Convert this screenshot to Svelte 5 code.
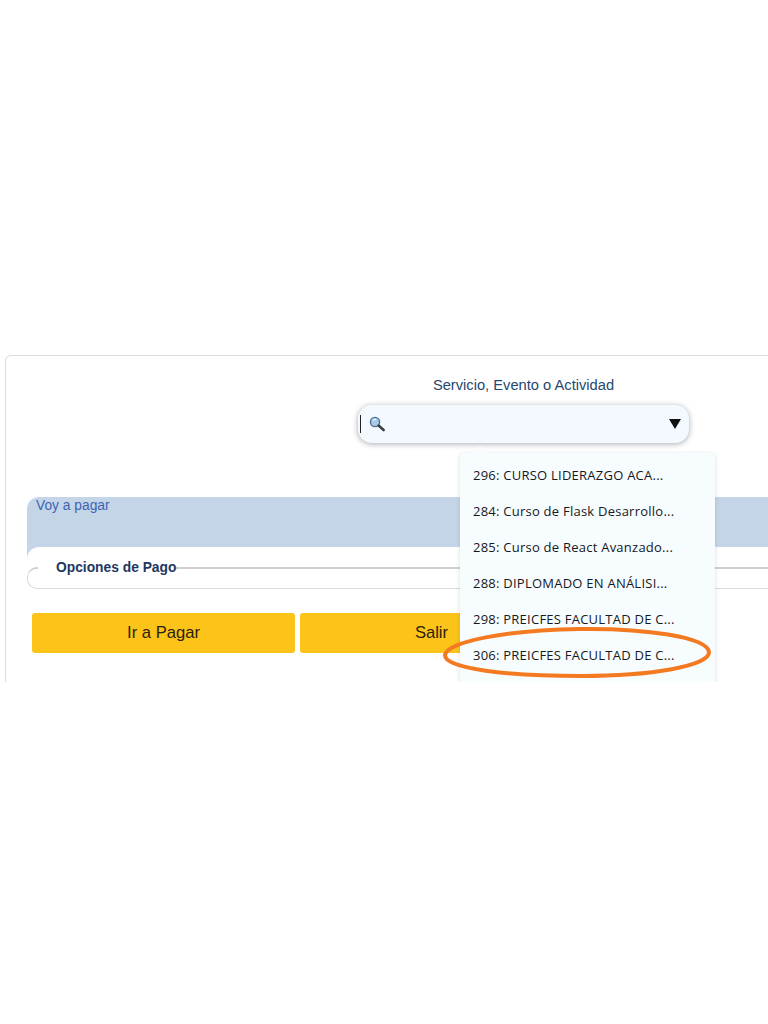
<script>
  const items = [
    "296: CURSO LIDERAZGO ACA...",
    "284: Curso de Flask Desarrollo...",
    "285: Curso de React Avanzado...",
    "288: DIPLOMADO EN ANÁLISI...",
    "298: PREICFES FACULTAD DE C...",
    "306: PREICFES FACULTAD DE C...",
    "",
  ];
</script>

<div class="page">
  <div class="card">
    <div class="picker">
      <div class="picker-label">Servicio, Evento o Actividad</div>
      <div class="field">
        <span class="caret"></span>
        <svg class="search" viewBox="0 0 16 16" width="16" height="16">
          <circle cx="6" cy="6" r="4.6" fill="#a9c8e8" stroke="#4d6f94" stroke-width="1.4" />
          <path d="M4 4.4a3 3 0 0 1 3-1" fill="none" stroke="#eef6fd" stroke-width="1.2" />
          <path d="M9.6 9.6l5 4.4" stroke="#3a3f46" stroke-width="2.6" stroke-linecap="round" />
        </svg>
        <svg class="arrow" viewBox="0 0 12 10" width="12" height="10">
          <path d="M0 0h12L6 10z" fill="#111" />
        </svg>
      </div>
    </div>

    <div class="banner">Voy a pagar</div>
    <div class="panel">
      <fieldset>
        <legend>Opciones de Pago</legend>
      </fieldset>
      <div class="actions">
        <button>Ir a Pagar</button>
        <button>Salir</button>
      </div>
    </div>

    <div class="dropdown">
      <ul>
        {#each items as item}
          <li>{item}</li>
        {/each}
      </ul>
    </div>

    <svg class="circled" viewBox="0 0 272 54" width="272" height="54">
      <path
        d="M4 29C6 15 70 4 138 3c66-1 128 8 130 23 1 14-58 24-128 24C68 50 3 43 4 29z"
        fill="none"
        stroke="#f47a22"
        stroke-width="4"
      />
    </svg>
  </div>
</div>

<style>
  :global(body) {
    background: #fff;
    font-family: "Liberation Sans", Arial, sans-serif;
  }

  .page {
    width: 768px;
    height: 1024px;
    box-sizing: border-box;
    padding: 355px 0 0 5px;
    overflow: hidden;
  }

  .card {
    position: relative;
    width: 800px;
    height: 326px;
    overflow: hidden;
    border: 1px solid #dcdcdc;
    border-bottom: none;
    border-radius: 6px 6px 0 0;
  }

  .picker {
    width: 331px;
    margin: 20px 0 0 352px;
  }

  .picker-label {
    height: 18px;
    line-height: 18px;
    font-size: 14.7px;
    text-align: center;
    color: #27476f;
  }

  .field {
    display: flex;
    align-items: center;
    height: 38px;
    margin-top: 11px;
    padding: 0 8px 0 2px;
    border-radius: 14px;
    background: #f3f9fe;
    box-shadow: 0 1px 5px 1px rgba(70, 80, 90, 0.36);
  }

  .caret {
    width: 1px;
    height: 18px;
    background: #222;
  }

  .search {
    margin-left: 8px;
  }

  .arrow {
    margin-left: auto;
  }

  .banner {
    height: 62px;
    box-sizing: border-box;
    margin: 54px 0 0 21px;
    padding-left: 9px;
    border-radius: 12px 0 0 0;
    background: #c3d5e6;
    font-size: 13.8px;
    line-height: 17px;
    color: #3f63b5;
  }

  .panel {
    margin: -12px 0 0 21px;
    padding-top: 12px;
    border-radius: 12px 0 0 0;
    background: #fff;
  }

  fieldset {
    height: 30px;
    box-sizing: border-box;
    margin: 0;
    padding: 0;
    border: 1px solid #dadada;
    border-top: 2px solid #cfcfcf;
    border-right: none;
    border-radius: 10px 0 0 10px;
  }

  legend {
    margin-left: 10px;
    padding: 0 0 0 18px;
    background: #fff;
    font-size: 13.8px;
    line-height: 18px;
    font-weight: 700;
    color: #1d3763;
  }

  .actions {
    display: flex;
    gap: 5px;
    margin: 24px 0 0 5px;
  }

  button {
    width: 263px;
    height: 40px;
    padding: 0;
    border: none;
    border-radius: 3px;
    background: #fcc318;
    font: 16.6px "Liberation Sans", Arial, sans-serif;
    color: #2b1d10;
  }

  .dropdown {
    position: absolute;
    left: 454px;
    top: 97px;
    width: 255px;
    border-radius: 4px;
    background: #f7fcfe;
    box-shadow: 0 1px 4px rgba(90, 100, 110, 0.22);
  }

  .dropdown::before {
    content: "";
    position: absolute;
    left: 15px;
    top: -5px;
    width: 10px;
    height: 10px;
    background: #f7fcfe;
    transform: rotate(45deg);
  }

  ul {
    position: relative;
    margin: 0;
    padding: 3.5px 0 0;
    list-style: none;
  }

  li {
    height: 36px;
    padding-left: 13px;
    font: 500 13px/36px "Open Sans", "Noto Sans", sans-serif;
    letter-spacing: 0.24px;
    color: #15181c;
    white-space: nowrap;
  }

  .circled {
    position: absolute;
    left: 435px;
    top: 270px;
  }
</style>
